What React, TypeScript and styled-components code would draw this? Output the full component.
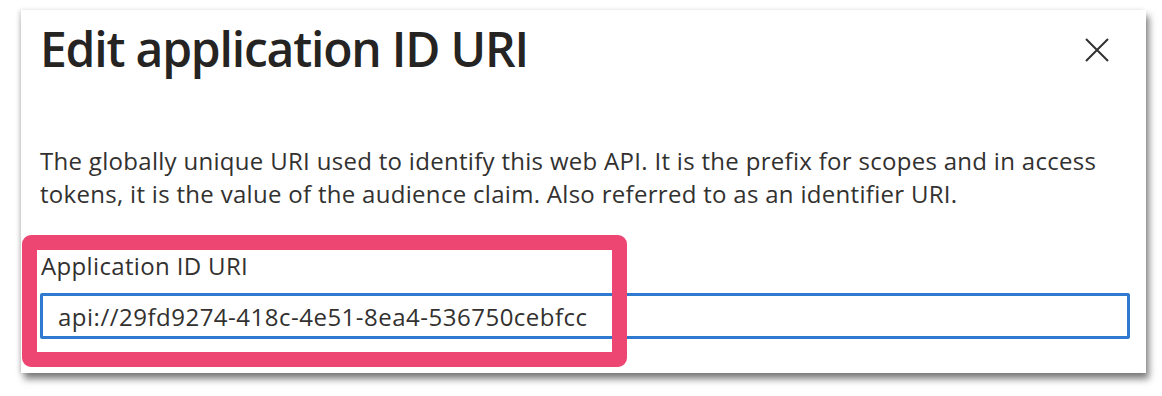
import React from "react"
import styled, { createGlobalStyle } from "styled-components"

const GlobalStyle = createGlobalStyle`
    html, body {
        margin: 0;
        background: #ffffff;
    }
    body {
        font-family: "Open Sans", "Noto Sans", sans-serif;
        color: #323130;
    }
`

const Page = styled.div`
    min-height: 396px;
    box-sizing: border-box;
    padding: 10px 0 0 21px;
`

const Panel = styled.section`
    width: 1125px;
    height: 363px;
    box-sizing: border-box;
    background: #ffffff;
    box-shadow: 3px 6px 7px rgba(0, 0, 0, 0.5), -2px 0 4px rgba(0, 0, 0, 0.12);
    padding: 0 16px 0 19px;
    display: flex;
    flex-direction: column;
`

const Header = styled.header`
    display: flex;
    align-items: center;
    justify-content: space-between;
    height: 78px;
`

const Title = styled.h1`
    margin: 0;
    font-size: 48px;
    font-weight: 600;
    letter-spacing: -1.2px;
    color: #252423;
    line-height: 1;
`

const CloseButton = styled.button`
    width: 40px;
    height: 40px;
    border: none;
    background: transparent;
    padding: 0;
    margin-right: 13px;
    margin-top: 2px;
    display: flex;
    align-items: center;
    justify-content: center;
    cursor: pointer;
`

const Description = styled.p`
    margin: 56px 0 0 0;
    font-size: 24px;
    letter-spacing: 0.3px;
    line-height: 33px;
    color: #323130;
`

const Field = styled.div`
    position: relative;
    margin-top: 41px;
    display: flex;
    flex-direction: column;
`

const Label = styled.label`
    font-size: 24px;
    letter-spacing: 0.35px;
    line-height: 30px;
    margin-left: 1px;
    color: #323130;
`

const Input = styled.input`
    margin-top: 12px;
    height: 46px;
    box-sizing: border-box;
    border: 3px solid #2f79cf;
    border-radius: 2px;
    padding: 0 15px;
    font-family: inherit;
    font-size: 24px;
    letter-spacing: 0.5px;
    color: #323130;
    outline: none;
`

const Highlight = styled.div`
    position: absolute;
    left: -18px;
    top: -16px;
    width: 605px;
    height: 132px;
    box-sizing: border-box;
    border: 15px solid #ed4672;
    border-radius: 9px;
    pointer-events: none;
`

const CloseIcon = () => (
    <svg width="24" height="24" viewBox="0 0 24 24">
        <path d="M1 1 L23 23 M23 1 L1 23" stroke="#323130" strokeWidth="2" fill="none" />
    </svg>
)

const App: React.FC = () => (
    <>
        <GlobalStyle />
        <Page>
            <Panel>
                <Header>
                    <Title>Edit application ID URI</Title>
                    <CloseButton aria-label="Close">
                        <CloseIcon />
                    </CloseButton>
                </Header>
                <Description>
                    The globally unique URI used to identify this web API. It is the prefix for scopes and in access
                    tokens, it is the value of the audience claim. Also referred to as an identifier URI.
                </Description>
                <Field>
                    <Label htmlFor="app-id-uri">Application ID URI</Label>
                    <Input id="app-id-uri" defaultValue="api://29fd9274-418c-4e51-8ea4-536750cebfcc" />
                    <Highlight />
                </Field>
            </Panel>
        </Page>
    </>
)

export default App
